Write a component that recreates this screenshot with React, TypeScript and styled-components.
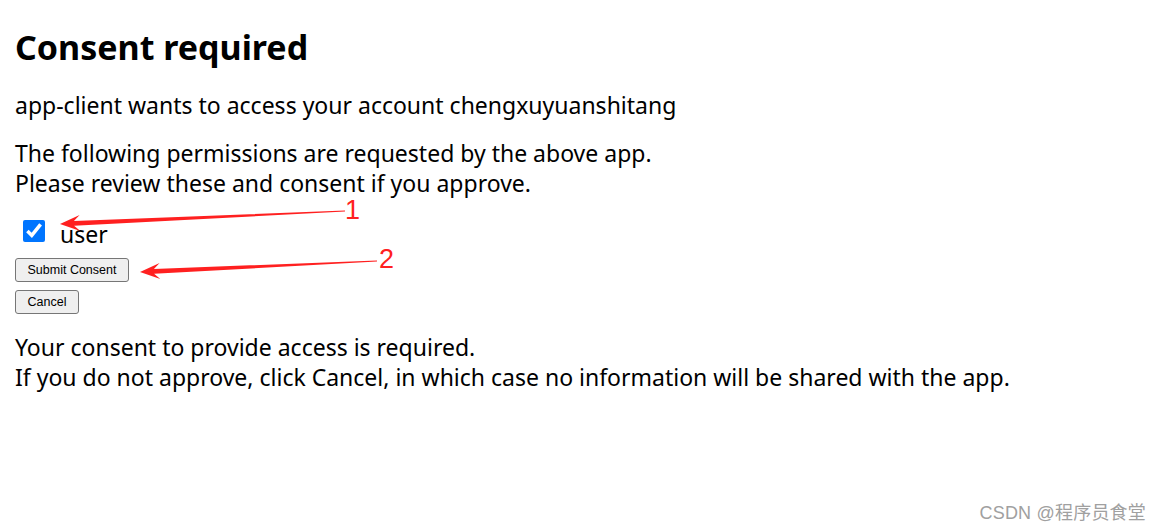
import React from "react";
import styled, { createGlobalStyle } from "styled-components";

const GlobalStyle = createGlobalStyle`
  html, body {
    margin: 0;
    padding: 0;
    background: #ffffff;
  }
  body {
    font-family: "Noto Sans", "Open Sans", sans-serif;
    color: #000000;
  }
`;

const Page = styled.div`
  position: relative;
  width: 1161px;
  height: 531px;
  box-sizing: border-box;
  padding: 25px 15px 0 15px;
  overflow: hidden;
`;

const Title = styled.h1`
  margin: 0;
  font-size: 34px;
  line-height: 44px;
  font-weight: 700;
`;

const Text = styled.p<{ $top: number }>`
  margin: ${(p) => p.$top}px 0 0 0;
  font-size: 23px;
  line-height: 30px;
`;

const ScopeRow = styled.label`
  display: flex;
  align-items: center;
  gap: 15px;
  height: 24px;
  margin-top: 21px;
  font-size: 23px;
  padding-left: 8px;
`;

const ScopeName = styled.span`
  padding-top: 6px;
`;

const Check = styled.input`
  width: 22px;
  height: 22px;
  margin: 0;
  accent-color: #0075ff;
`;

const Actions = styled.div`
  display: flex;
  flex-direction: column;
  align-items: flex-start;
  gap: 8px;
  margin-top: 15px;
`;

const Button = styled.button`
  height: 24px;
  padding: 0 11.5px;
  font-family: "Liberation Sans", Arial, sans-serif;
  font-size: 12.5px;
  color: #000;
  background: #efefef;
  border: 1px solid #767676;
  border-radius: 3px;
`;

const Overlay = styled.svg`
  position: absolute;
  left: 0;
  top: 0;
  pointer-events: none;
`;

const Watermark = styled.div`
  position: absolute;
  right: 15px;
  bottom: 7px;
  font-family: "Liberation Sans", "Noto Sans CJK SC", sans-serif;
  font-size: 18px;
  color: #a0a0a0;
  letter-spacing: 0.2px;
`;

type Pt = [number, number];

function arrowPoints(tail: Pt, tip: Pt): string {
  const dx = tip[0] - tail[0];
  const dy = tip[1] - tail[1];
  const len = Math.hypot(dx, dy);
  const ux = dx / len;
  const uy = dy / len;
  const px = -uy;
  const py = ux;
  const headLen = 20;
  const headW = 8;
  const shaftTail = 0.6;
  const shaftHead = 2.4;
  const bx = tip[0] - ux * headLen;
  const by = tip[1] - uy * headLen;
  const nx = tip[0] - ux * (headLen - 6);
  const ny = tip[1] - uy * (headLen - 6);
  const pts: Pt[] = [
    [tail[0] + px * shaftTail, tail[1] + py * shaftTail],
    [nx + px * shaftHead, ny + py * shaftHead],
    [bx + px * headW, by + py * headW],
    [tip[0], tip[1]],
    [bx - px * headW, by - py * headW],
    [nx - px * shaftHead, ny - py * shaftHead],
    [tail[0] - px * shaftTail, tail[1] - py * shaftTail],
  ];
  return pts.map((p) => `${p[0].toFixed(1)},${p[1].toFixed(1)}`).join(" ");
}

export default function App() {
  return (
    <>
      <GlobalStyle />
      <Page>
        <Title>Consent required</Title>
        <Text $top={21}>app-client wants to access your account chengxuyuanshitang</Text>
        <Text $top={18}>
          The following permissions are requested by the above app.
          <br />
          Please review these and consent if you approve.
        </Text>
        <form onSubmit={(e) => e.preventDefault()}>
          <ScopeRow>
            <Check type="checkbox" defaultChecked name="scope" value="user" />
            <ScopeName>user</ScopeName>
          </ScopeRow>
          <Actions>
            <Button type="submit">Submit Consent</Button>
            <Button type="button">Cancel</Button>
          </Actions>
        </form>
        <Text $top={18}>
          Your consent to provide access is required.
          <br />
          If you do not approve, click Cancel, in which case no information will be shared with the app.
        </Text>

        <Overlay width="1161" height="531" viewBox="0 0 1161 531">
          <polygon points={arrowPoints([345, 211], [60, 224])} fill="#ff2020" />
          <polygon points={arrowPoints([377, 261], [140, 272])} fill="#ff2020" />
          <text x="345" y="219" fill="#ff2020" fontSize="27" fontFamily="Liberation Sans, sans-serif">1</text>
          <text x="379" y="268" fill="#ff2020" fontSize="27" fontFamily="Liberation Sans, sans-serif">2</text>
        </Overlay>
        <Watermark>CSDN @程序员食堂</Watermark>
      </Page>
    </>
  );
}
